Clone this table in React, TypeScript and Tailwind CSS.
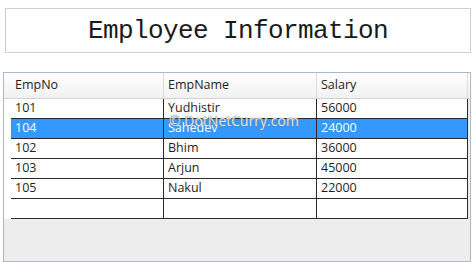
import React from "react";

const rows: { no: string; name: string; salary: string; sel?: boolean }[] = [
  { no: "101", name: "Yudhistir", salary: "56000" },
  { no: "104", name: "Sahedev", salary: "24000", sel: true },
  { no: "102", name: "Bhim", salary: "36000" },
  { no: "103", name: "Arjun", salary: "45000" },
  { no: "105", name: "Nakul", salary: "22000" },
  { no: "", name: "", salary: "" },
];

export default function App() {
  return (
    <div className="w-[474px] h-[262px] bg-white overflow-hidden flex flex-col">
      <div className="ml-[5px] mt-[8px] w-[466px] h-[45px] border border-[#cfcfcf] flex items-center justify-center">
        <span
          className="text-[26px] tracking-[-0.6px] text-[#1a1a1a] leading-none"
          style={{ fontFamily: '"Liberation Mono", monospace' }}
        >
          Employee Information
        </span>
      </div>
      <div
        className="relative ml-[3px] mt-[19px] w-[468px] h-[190px] border border-[#a9b8cc] bg-[#ededed] flex flex-col text-[12.5px] text-[#1e1e1e]"
        style={{ fontFamily: '"Open Sans", sans-serif' }}
      >
        <div className="flex h-[26px] bg-gradient-to-b from-[#ffffff] to-[#f1f1f1] border-b border-[#d2d2d2]">
          <div className="w-[7px]" />
          <div className="w-[153px] border-r border-[#dcdcdc] flex items-center pl-[4px]">EmpNo</div>
          <div className="w-[153px] border-r border-[#dcdcdc] flex items-center pl-[4px]">EmpName</div>
          <div className="w-[151px] border-r border-[#dcdcdc] flex items-center pl-[4px]">Salary</div>
        </div>
        {rows.map((r, i) => (
          <div key={i} className="flex h-[20px]">
            <div className="w-[7px] bg-white" />
            <div
              className={`flex border-b border-[#2a2a2a] ${
                r.sel ? "bg-[#3399ff] text-white" : "bg-white"
              }`}
            >
              <div className="w-[153px] border-r border-[#2a2a2a] flex items-center pl-[4px]">{r.no}</div>
              <div className="w-[153px] border-r border-[#2a2a2a] flex items-center pl-[4px]">{r.name}</div>
              <div className="w-[151px] border-r border-[#2a2a2a] flex items-center pl-[4px]">{r.salary}</div>
            </div>
          </div>
        ))}
        <div className="absolute left-[165px] top-[37px] text-[14px] text-white/80 [text-shadow:0_0_1px_#777,0_0_1px_#777] pointer-events-none">
          © DotNetCurry.com
        </div>
      </div>
    </div>
  );
}
